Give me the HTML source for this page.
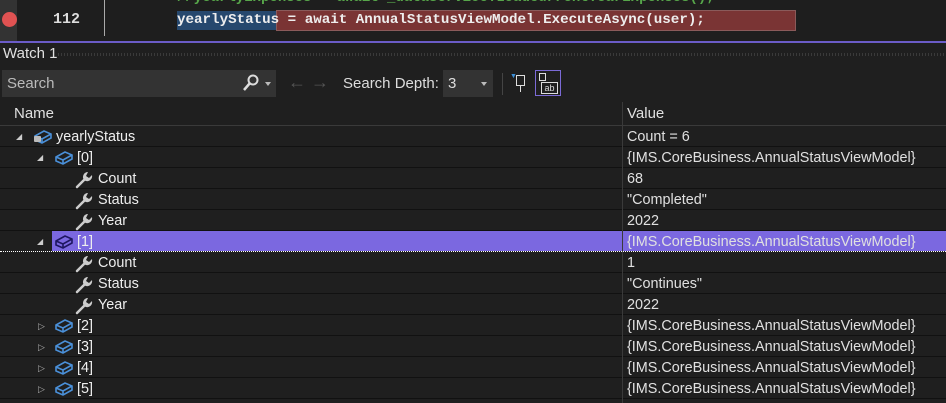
<!DOCTYPE html><html><head><style>
html,body{margin:0;width:946px;height:403px;overflow:hidden}
body{background:#1f1f1f;position:relative;font-family:"Liberation Sans",sans-serif;color:#e0e0e0}
.a{position:absolute}
.code{font-family:"Liberation Mono",monospace;font-size:14px;font-weight:bold;white-space:pre}
.row{position:absolute;left:0;width:946px;height:20px;border-bottom:1px solid #111;font-size:14.4px;line-height:22px}
.row .n{position:absolute;top:0;white-space:nowrap}
</style></head><body>
<div class="a" style="left:0;top:0;width:946px;height:41px;background:#1e1e1e"></div>
<div class="a" style="left:0;top:0;width:17px;height:41px;background:#333"></div>
<div class="a" style="left:2px;top:12px;width:15px;height:15px;border-radius:50%;background:#e05252"></div>
<div class="a code" style="left:53px;top:-11px;color:#999;font-weight:normal">111</div>
<div class="a code" style="left:53px;top:11px;color:#ddd;font-size:15px">112</div>
<div class="a" style="left:104px;top:0;width:1px;height:36px;background:#aaa"></div>
<div class="a code" style="left:177px;top:-10px;color:#57a64a">//yearlyExpenses = await _dataService.LoadCurrentYearExpenses();</div>
<div class="a" style="left:177px;top:11px;width:100px;height:19px;background:#26486e"></div>
<div class="a" style="left:277px;top:11px;width:518px;height:19px;background:#7a3434;outline:1px solid #8a5a5a"></div>
<div class="a code" style="left:177px;top:11px;color:#eee;line-height:19px;font-size:14.2px">yearlyStatus = await AnnualStatusViewModel.ExecuteAsync(user);</div>
<div class="a" style="left:0;top:41px;width:946px;height:2px;background:#6b5cc8"></div>
<div class="a" style="left:3px;top:45px;font-size:15px;line-height:18px">Watch 1</div>
<div class="a" style="left:58px;top:53px;width:888px;height:3px;background:repeating-linear-gradient(90deg,#3a3a3a 0 1px,transparent 1px 3px)"></div>
<div class="a" style="left:2px;top:70px;width:274px;height:27px;background:#333;font-size:15px;line-height:28px;color:#bbb;text-indent:5px">Search</div>
<svg class="a" style="left:242px;top:74px" width="18" height="18"><circle cx="11" cy="6" r="4.5" fill="none" stroke="#ddd" stroke-width="2"/><path d="M8 9 L2 16" stroke="#ddd" stroke-width="2.5"/></svg>
<div class="a" style="left:265px;top:82px;border:3px solid transparent;border-top:4px solid #bbb"></div>
<div class="a" style="left:288px;top:72px;font-size:18px;color:#555">&#x2190; &#x2192;</div>
<div class="a" style="left:343px;top:75px;font-size:15px;color:#ddd">Search Depth:</div>
<div class="a" style="left:443px;top:70px;width:50px;height:27px;background:#333;font-size:15px;line-height:28px;color:#ddd;text-indent:5px">3</div>
<div class="a" style="left:481px;top:82px;border:3px solid transparent;border-top:4px solid #bbb"></div>
<div class="a" style="left:502px;top:73px;width:1px;height:22px;background:#444"></div>
<div class="a" style="left:510px;top:73px;font-size:7px;color:#3c8fd8">&#9660;</div>
<div class="a" style="left:516px;top:75px;width:7px;height:9px;border:1px solid #ddd"></div>
<div class="a" style="left:520px;top:85px;width:1px;height:7px;background:#ddd"></div>
<div class="a" style="left:535px;top:70px;width:26px;height:26px;border:1px solid #7b6ad6;box-sizing:border-box"></div>
<div class="a" style="left:541px;top:82px;width:15px;height:10px;border:1px solid #ddd;font-size:9px;line-height:10px;color:#ddd;text-align:center">ab</div>
<div class="a" style="left:539px;top:73px;width:5px;height:6px;border:1px solid #ddd"></div>
<div class="a" style="left:0;top:102px;width:946px;height:23px;border-bottom:1px solid #3a3a3a"></div>
<div class="a" style="left:14px;top:105px;font-size:15px">Name</div>
<div class="a" style="left:627px;top:105px;font-size:15px">Value</div>
<div class="a" style="left:52px;top:231px;width:894px;height:20px;background:#7b68e0"></div>
<div class="a" style="left:0;top:230px;width:946px;height:0;border-top:1px dotted #fff"></div>
<div class="a" style="left:0;top:251px;width:946px;height:0;border-top:1px dotted #fff"></div>
<div id="rows"></div>
<div class="a" style="left:622px;top:102px;width:1px;height:301px;background:#3a3a3a"></div>
<script>
var R=[[0,1,'yearlyStatus','Count = 6','lock'],[1,1,'[0]','{IMS.CoreBusiness.AnnualStatusViewModel}','obj'],[2,0,'Count','68','w'],[2,0,'Status','"Completed"','w'],[2,0,'Year','2022','w'],[1,1,'[1]','{IMS.CoreBusiness.AnnualStatusViewModel}','sel'],[2,0,'Count','1','w'],[2,0,'Status','"Continues"','w'],[2,0,'Year','2022','w'],[1,2,'[2]','{IMS.CoreBusiness.AnnualStatusViewModel}','obj'],[1,2,'[3]','{IMS.CoreBusiness.AnnualStatusViewModel}','obj'],[1,2,'[4]','{IMS.CoreBusiness.AnnualStatusViewModel}','obj'],[1,2,'[5]','{IMS.CoreBusiness.AnnualStatusViewModel}','obj'],[1,2,'','','obj']];
var h='';R.forEach(function(r,i){var t=126+i*21,ind=r[0]*21;
var box=function(c){return '<svg class="n" style="left:'+(ind+33)+'px;top:2px" width="20" height="18"><path d="M2 8 L11 3 L18 6 L18 10 L9 15 L2 12 Z M2 8 L9 11 L18 6 M9 11 L9 15" fill="none" stroke="'+c+'" stroke-width="1.6"/></svg>'};
var ic=r[4]=='sel'?box('#1e1660'):box('#4a90d9');
if(r[4]=='lock')ic=box('#4a90d9')+'<div class="n" style="left:'+(ind+34)+'px;top:10px;width:7px;height:6px;background:#bbb;border-radius:1px"></div>';
if(r[4]=='w')ic='<svg class="n" style="left:'+(ind+33)+'px;top:2px" width="19" height="19"><path d="M2 17 L10 9" stroke="#ccc" stroke-width="2.5" stroke-linecap="round"/><path d="M9 10 A5 5 0 0 1 13 2 L11 6 L14 8 L17 5 A5 5 0 0 1 9 10" fill="#ccc"/></svg>';
var ex=r[1]==1?'<span class="n" style="left:'+(ind+16)+'px;font-size:8px;color:#ccc">&#9698;</span>':r[1]==2?'<span class="n" style="left:'+(ind+17)+'px;font-size:9px;color:#aaa">&#9655;</span>':'';
h+='<div class="row" style="top:'+t+'px;'+(i==5?'border-bottom:0':'')+'">'+ex+ic+'<span class="n" style="left:'+(ind+56)+'px;color:#eee">'+r[2]+'</span><span class="n" style="left:627px">'+r[3]+'</span></div>';});
document.getElementById('rows').innerHTML=h;
</script>
</body></html>
